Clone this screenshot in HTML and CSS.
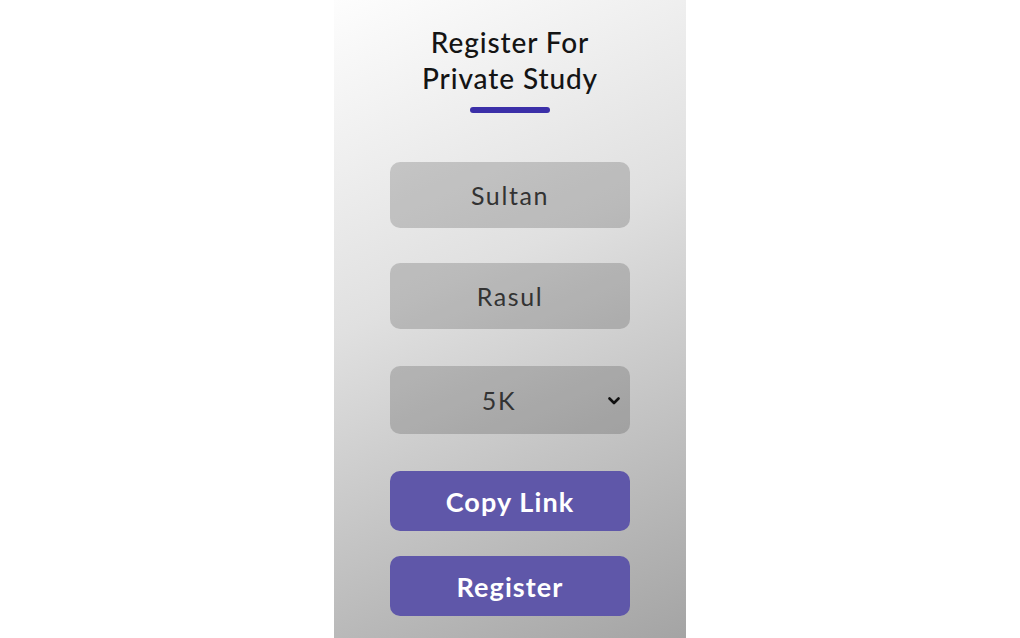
FILE: index.html
```html
<!DOCTYPE html>
<html lang="en">
<head>
<meta charset="utf-8">
<title>Register For Private Study</title>
<link rel="stylesheet" href="styles.css">
</head>
<body>
<main class="panel">
  <h1 class="title">Register For<br>Private Study</h1>
  <div class="bar"></div>
  <form class="form">
    <input class="field" type="text" value="Sultan">
    <input class="field" type="text" value="Rasul">
    <div class="select-wrap">
      <select class="field select">
        <option>5K</option>
        <option>10K</option>
      </select>
      <svg class="chev" width="12" height="8" viewBox="0 0 12 8"><path d="M1.5 1.5 L6 6 L10.5 1.5" fill="none" stroke="#111" stroke-width="2.6" stroke-linecap="round" stroke-linejoin="round"/></svg>
    </div>
    <button type="button" class="btn btn-copy">Copy Link</button>
    <button type="button" class="btn btn-reg">Register</button>
  </form>
</main>
</body>
</html>
```
FILE: styles.css
```css
html, body {
  margin: 0;
  padding: 0;
  background: #ffffff;
  height: 100%;
}
body {
  display: flex;
  justify-content: center;
  font-family: "Lato", "Open Sans", sans-serif;
}
.panel {
  width: 352px;
  height: 638px;
  background: linear-gradient(155deg, #fdfdfd 0%, #e0e0e0 42%, #a4a4a4 100%);
  display: flex;
  flex-direction: column;
  align-items: center;
  box-sizing: border-box;
  padding-top: 24px;
}
.title {
  margin: 0;
  font-size: 28px;
  font-weight: 500;
  line-height: 36px;
  letter-spacing: 0.9px;
  text-align: center;
  color: #141414;
}
.bar {
  width: 80px;
  height: 6px;
  border-radius: 3px;
  background: #3b2fa8;
  margin-top: 11px;
}
.form {
  display: flex;
  flex-direction: column;
  align-items: center;
  margin-top: 49px;
  width: 240px;
}
.field {
  box-sizing: border-box;
  width: 240px;
  height: 66px;
  border: none;
  border-radius: 10px;
  background: rgba(0, 0, 0, 0.17);
  font-family: "Lato", "Open Sans", sans-serif;
  font-size: 25px;
  font-weight: 400;
  letter-spacing: 1.6px;
  color: #333;
  text-align: center;
  outline: none;
  margin: 0;
}
.field + .field { margin-top: 35px; }
.select-wrap {
  position: relative;
  margin-top: 37px;
}
.select {
  height: 68px;
  appearance: none;
  -webkit-appearance: none;
  text-align-last: center;
  padding: 0 22px 0 0;
  display: block;
}
.chev {
  position: absolute;
  right: 10px;
  top: 31px;
}
.btn {
  box-sizing: border-box;
  width: 240px;
  height: 60px;
  border: none;
  border-radius: 10px;
  background: #5f57a9;
  color: #ffffff;
  font-family: "Lato", "Open Sans", sans-serif;
  font-size: 27px;
  font-weight: 700;
  letter-spacing: 1.1px;
  margin: 0;
  padding: 0;
}
.btn-copy { margin-top: 37px; }
.btn-reg { margin-top: 25px; }
```
